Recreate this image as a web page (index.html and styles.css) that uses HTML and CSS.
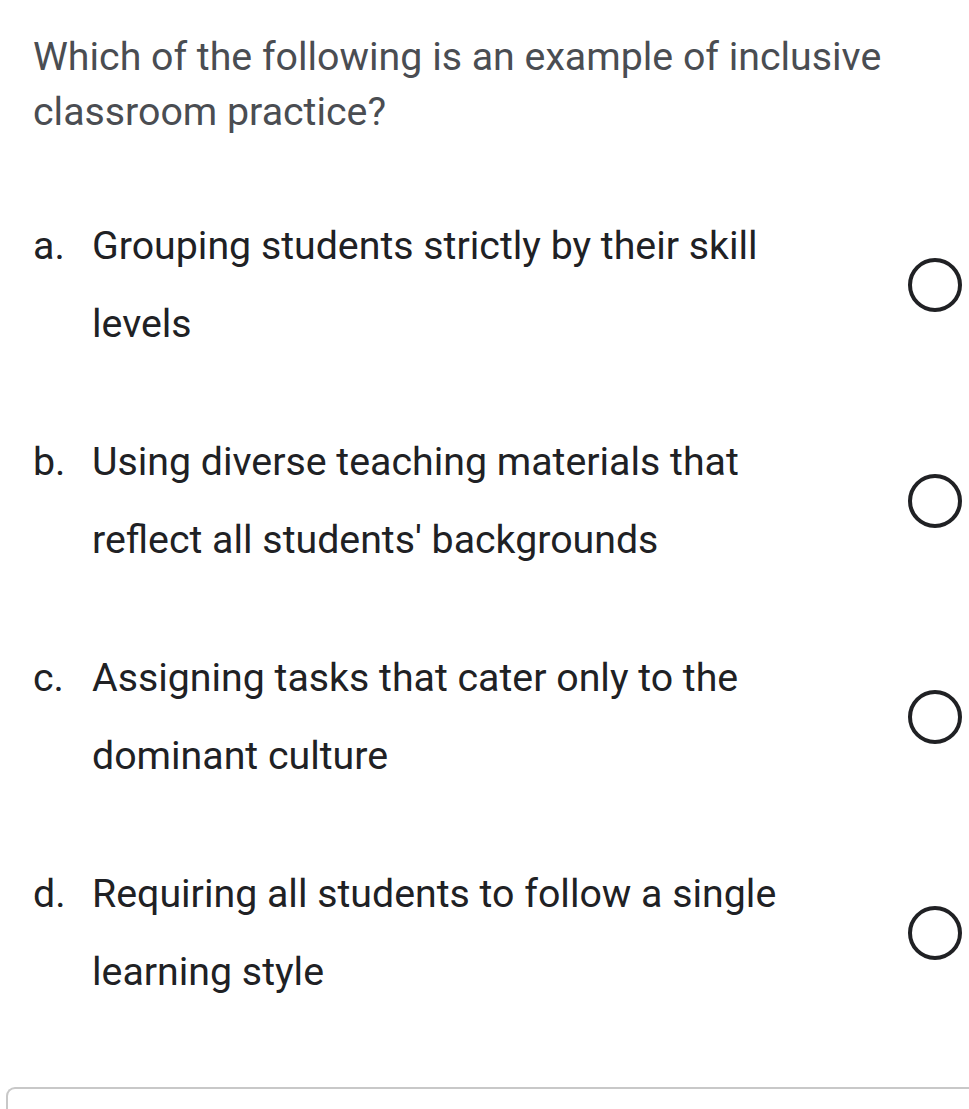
FILE: index.html
```html
<!DOCTYPE html>
<html lang="en">
<head>
<meta charset="utf-8">
<link rel="stylesheet" href="styles.css">
<title>Question</title>
</head>
<body>
<div class="page">
  <h1 class="question">Which of the following is an example of inclusive classroom practice?</h1>
  <ol class="options">
    <li class="option">
      <span class="marker">a.</span>
      <span class="text">Grouping students strictly by their skill levels</span>
      <span class="radio"></span>
    </li>
    <li class="option">
      <span class="marker">b.</span>
      <span class="text">Using diverse teaching materials that reflect all students' backgrounds</span>
      <span class="radio"></span>
    </li>
    <li class="option">
      <span class="marker">c.</span>
      <span class="text">Assigning tasks that cater only to the dominant culture</span>
      <span class="radio"></span>
    </li>
    <li class="option">
      <span class="marker">d.</span>
      <span class="text">Requiring all students to follow a single learning style</span>
      <span class="radio"></span>
    </li>
  </ol>
  <div class="answer-box"></div>
</div>
</body>
</html>
```
FILE: styles.css
```css
html, body {
  margin: 0;
  padding: 0;
  background: #ffffff;
}
body {
  font-family: Roboto, "Liberation Sans", sans-serif;
  overflow: hidden;
  height: 1109px;
}
.page {
  padding-top: 30px;
}
.question {
  margin: 0 0 0 33px;
  font-size: 39.3px;
  line-height: 55px;
  font-weight: 400;
  color: #4a4d52;
  max-width: 900px;
}
.options {
  list-style: none;
  margin: 67px 0 0 33px;
  padding: 0;
  display: flex;
  flex-direction: column;
  gap: 60px;
}
.option {
  display: grid;
  grid-template-columns: 59px 750px 1fr;
  align-items: center;
  font-size: 39.3px;
  line-height: 78px;
  color: #202124;
}
.marker {
  align-self: start;
}
.radio {
  justify-self: end;
  margin-right: 7px;
  width: 46px;
  height: 46px;
  border: 4.5px solid #202124;
  border-radius: 50%;
}
.answer-box {
  margin: 76px 0 0 6px;
  height: 60px;
  border: 2px solid #c8c8c8;
  border-right: none;
  border-bottom: none;
  border-top-left-radius: 9px;
}
```
